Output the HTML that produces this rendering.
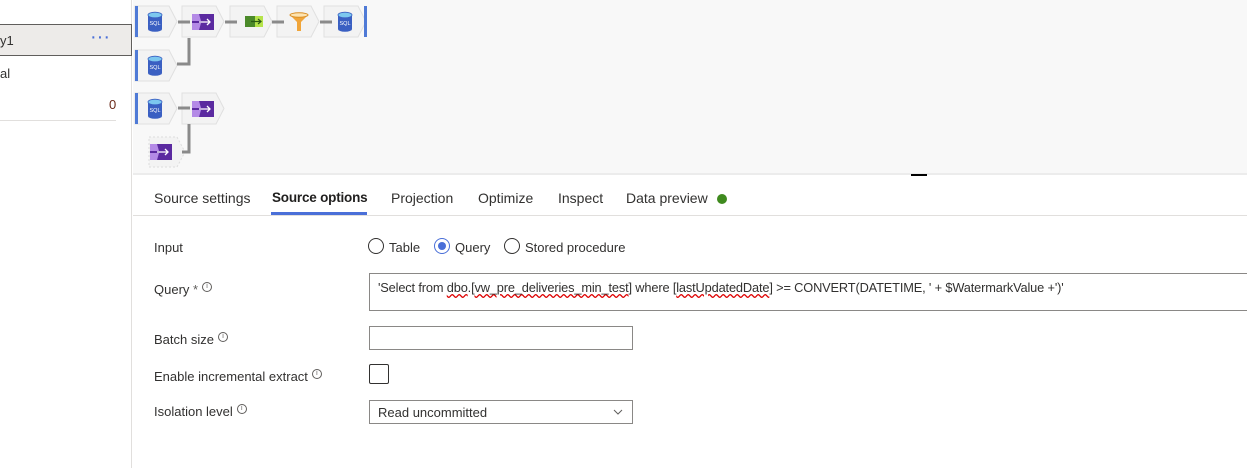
<!DOCTYPE html>
<html><head><style>
*{box-sizing:border-box;margin:0;padding:0}
body{width:1247px;height:468px;overflow:hidden;background:#fff;font-family:"Liberation Sans",sans-serif;font-size:13px;color:#323130;position:relative}
.abs{position:absolute}
.lbl{position:absolute;left:154px;font-size:13px;color:#323130}
.info{display:inline-block;width:10px;height:10px;border:1px solid #605e5c;border-radius:50%;font-size:7px;line-height:8px;text-align:center;vertical-align:top;margin-left:4px;color:#605e5c}
.radio{position:absolute;width:16px;height:16px;border:1px solid #323130;border-radius:50%}
.tab{position:absolute;top:190px;font-size:14px;color:#323130}
</style></head><body>
<div class="abs" style="left:0;top:0;width:132px;height:468px;background:#fff;border-right:1px solid #e1dfdd"></div>
<div class="abs" style="left:-2px;top:24px;width:134px;height:32px;background:#edebe9;border:1px solid #605e5c"></div>
<div class="abs" style="left:0;top:33px;font-size:13px">y1</div>
<div class="abs" style="left:90px;top:27px;font-size:20px;line-height:20px;color:#4a6fd8;letter-spacing:0px">···</div>
<div class="abs" style="left:0;top:66px">al</div>
<div class="abs" style="left:109px;top:97px;color:#6b2a1a">0</div>
<div class="abs" style="left:0;top:120px;width:116px;height:1px;background:#e1dfdd"></div>
<div class="abs" style="left:133px;top:0;width:1114px;height:175px;background:#f8f8f8;border-bottom:2px solid #ececec"></div>
<div class="abs" style="left:911px;top:174px;width:16px;height:2px;background:#000"></div>
<svg class="abs" style="left:133px;top:0" width="250" height="170">
<defs>
<g id="nd"><path d="M2 6 H36 L44 21.5 L36 37 H2 Z" fill="#f3f3f3" stroke="#e0e0e0"/></g>
<g id="sql"><path d="M-7 -7 V7 A7 2.8 0 0 0 7 7 V-7Z" fill="#3a5fc2"/><ellipse cx="0" cy="-7" rx="7" ry="2.8" fill="#7cc7ef" stroke="#3a5fc2" stroke-width="0.8"/><text x="0" y="3" font-size="5.5" fill="#fff" text-anchor="middle" font-family="Liberation Sans">SQL</text></g>
<g id="jn"><rect x="-11" y="-8" width="22" height="16" fill="#5b2aa0"/><path d="M-11 -8 H-4 L-2 -1 H-11Z M-11 8 H-4 L-2 1 H-11Z" fill="#b48ae6"/><path d="M-4 0 H7 M4 -3 L7 0 L4 3" stroke="#fff" stroke-width="1.3" fill="none"/></g>
</defs>
<use href="#nd" x="0" y="0"/><rect x="2" y="6" width="3" height="31" fill="#4f7ad6"/>
<use href="#sql" x="22" y="22"/>
<use href="#nd" x="47" y="0"/><use href="#jn" x="70" y="22"/>
<use href="#nd" x="95" y="0"/><rect x="112" y="16" width="10" height="11" fill="#4b8a2a"/><rect x="122" y="16" width="8" height="11" fill="#b5e34a"/><path d="M118 21.5 H128 M125 19 L128 21.5 L125 24" stroke="#2b5a14" stroke-width="1.2" fill="none"/>
<use href="#nd" x="142" y="0"/><path d="M157 15 H175 L168 22 V31 H164 V22Z" fill="#f0a53a"/><ellipse cx="166" cy="15" rx="9" ry="2.2" fill="#fde3b0" stroke="#d98d22"/>
<use href="#nd" x="189" y="0"/><rect x="231" y="6" width="3" height="31" fill="#4f7ad6"/><use href="#sql" x="212" y="22"/>
<use href="#nd" x="0" y="44"/><rect x="2" y="50" width="3" height="31" fill="#4f7ad6"/><use href="#sql" x="22" y="66"/>
<use href="#nd" x="0" y="87"/><rect x="2" y="93" width="3" height="31" fill="#4f7ad6"/><use href="#sql" x="22" y="109"/>
<use href="#nd" x="47" y="87"/><use href="#jn" x="70" y="109"/>
<path d="M16 137 H44 L52 152 L44 167 H16Z" fill="#f3f3f3" stroke="#ddd" stroke-dasharray="2 2"/>
<use href="#jn" x="28" y="152"/>
<g stroke="#8a8a8a" stroke-width="3" fill="none">
<path d="M45 22 H57 M92 22 H104 M139 22 H151 M187 22 H199"/>
<path d="M56 38 V64 H44"/>
<path d="M45 108 H57"/>
<path d="M56 124 V152 H49"/>
</g>
</svg>
<div class="tab" style="left:154px">Source settings</div>
<div class="tab" style="left:272px;font-weight:bold;color:#201f1e;font-size:13.5px;letter-spacing:-0.2px">Source options</div>
<div class="abs" style="left:271px;top:212px;width:96px;height:3px;background:#4a6fd8"></div>
<div class="tab" style="left:391px">Projection</div>
<div class="tab" style="left:478px">Optimize</div>
<div class="tab" style="left:558px">Inspect</div>
<div class="tab" style="left:626px">Data preview</div>
<div class="abs" style="left:717px;top:194px;width:10px;height:10px;border-radius:50%;background:#3f8a1e"></div>
<div class="abs" style="left:133px;top:215px;width:1114px;height:1px;background:#e1dfdd"></div>
<div class="lbl" style="top:240px">Input</div>
<div class="radio" style="left:368px;top:238px"></div><div class="abs" style="left:389px;top:240px">Table</div>
<div class="radio" style="left:434px;top:238px;border-color:#4a6fd8"></div><div class="abs" style="left:438px;top:242px;width:8px;height:8px;border-radius:50%;background:#4a6fd8"></div><div class="abs" style="left:455px;top:240px">Query</div>
<div class="radio" style="left:504px;top:238px"></div><div class="abs" style="left:525px;top:240px">Stored procedure</div>
<div class="lbl" style="top:282px">Query <span style="color:#605e5c">*</span><span class="info">i</span></div>
<div class="abs" style="left:369px;top:273px;width:890px;height:38px;border:1px solid #8a8886"></div>
<div class="abs" style="left:378px;top:280px;color:#323130;white-space:nowrap;font-size:12.8px;letter-spacing:-0.15px">'Select from <u style="text-decoration-color:#d00;text-decoration-style:wavy">dbo</u>.[<u style="text-decoration-color:#d00;text-decoration-style:wavy">vw_pre_deliveries_min_test</u>] where [<u style="text-decoration-color:#d00;text-decoration-style:wavy">lastUpdatedDate</u>] &gt;= CONVERT(DATETIME, ' + $WatermarkValue +')'</div>
<div class="lbl" style="top:332px">Batch size<span class="info">i</span></div>
<div class="abs" style="left:369px;top:326px;width:264px;height:24px;border:1px solid #8a8886"></div>
<div class="lbl" style="top:369px">Enable incremental extract<span class="info">i</span></div>
<div class="abs" style="left:369px;top:364px;width:20px;height:20px;border:1px solid #323130;border-radius:2px"></div>
<div class="lbl" style="top:404px">Isolation level<span class="info">i</span></div>
<div class="abs" style="left:369px;top:400px;width:264px;height:24px;border:1px solid #8a8886"></div>
<div class="abs" style="left:378px;top:405px">Read uncommitted</div>
<svg class="abs" style="left:613px;top:408px" width="10" height="8"><path d="M1 2 L5 6 L9 2" stroke="#605e5c" fill="none"/></svg>
</body></html>
